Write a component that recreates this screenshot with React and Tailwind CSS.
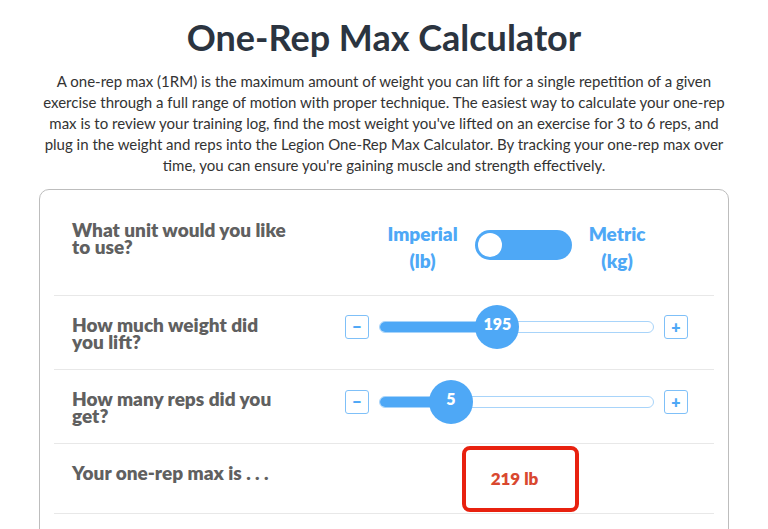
import React from "react";

const BLUE = "bg-[#4ea8f6]";

function StepButton({ children }) {
  return (
    <button className="flex h-[24px] w-[24px] shrink-0 items-center justify-center rounded-[3px] border border-[#7fc0f8] bg-white text-[16px] font-extrabold leading-none text-[#4ea8f6]">
      {children}
    </button>
  );
}

function Slider({ pos, value }) {
  return (
    <div className="flex items-center gap-[10px]">
      <StepButton>−</StepButton>
      <div className="relative h-[12px] flex-1 rounded-full border border-[#a8d4fa] bg-white">
        <div className={`h-full rounded-full ${BLUE}`} style={{ width: pos }} />
        <div
          className={`absolute top-1/2 flex h-[44px] w-[44px] -translate-x-1/2 -translate-y-1/2 items-center justify-center rounded-full ${BLUE} pb-[5px] text-[16px] font-extrabold text-white`}
          style={{ left: pos }}
        >
          {value}
        </div>
      </div>
      <StepButton>+</StepButton>
    </div>
  );
}

function Row({ question, children, className = "", leftClass = "", rightClass = "" }) {
  return (
    <div className={`flex border-b border-[#e8e8e8] ${className}`}>
      <div className={`w-[291px] shrink-0 pl-[18px] ${leftClass}`}>
        <p className="w-[219px] text-[19px] font-extrabold leading-[17px] text-[#606060]">{question}</p>
      </div>
      <div className={`flex-1 pr-[26px] ${rightClass}`}>{children}</div>
    </div>
  );
}

export default function App() {
  return (
    <div className="min-h-screen bg-white" style={{ fontFamily: "Lato, 'Open Sans', sans-serif" }}>
      <div className="mx-auto w-[690px] pt-[14px]">
        <h1 className="text-center text-[36px] font-bold leading-[46px] text-[#2b3440]">One-Rep Max Calculator</h1>
        <p className="mt-[11px] text-center text-[15px] leading-[21px] text-[#333]">
          A one-rep max (1RM) is the maximum amount of weight you can lift for a single repetition of a given exercise
          through a full range of motion with proper technique. The easiest way to calculate your one-rep max is to
          review your training log, find the most weight you've lifted on an exercise for 3 to 6 reps, and plug in the
          weight and reps into the Legion One-Rep Max Calculator. By tracking your one-rep max over time, you can ensure
          you're gaining muscle and strength effectively.
        </p>

        <div className="mt-[13px] rounded-[10px] border-[1.5px] border-[#bdbdbd] px-[14px]">
          <Row
            question="What unit would you like to use?"
            className="h-[106px] items-center"
            leftClass="mb-[9px]"
          >
            <div className="flex items-center justify-center gap-[17px] pt-[8px]">
              <div className="flex flex-col items-center text-[19px] font-extrabold leading-[27px] text-[#4ea8f6]">
                <span>Imperial</span>
                <span>(lb)</span>
              </div>
              <div className={`mt-[-4px] flex h-[30px] w-[97px] items-center rounded-full ${BLUE} px-[3px]`}>
                <div className="h-[24px] w-[24px] rounded-full bg-white" />
              </div>
              <div className="flex flex-col items-center text-[19px] font-extrabold leading-[27px] text-[#4ea8f6]">
                <span>Metric</span>
                <span>(kg)</span>
              </div>
            </div>
          </Row>

          <Row question="How much weight did you lift?" className="h-[74px] items-center" rightClass="mb-[12px]">
            <Slider pos="43%" value="195" />
          </Row>

          <Row question="How many reps did you get?" className="h-[74px] items-center" rightClass="mb-[10px]">
            <Slider pos="26%" value="5" />
          </Row>

          <Row question="Your one-rep max is . . ." className="h-[70px] items-start pt-[20px]" rightClass="-mt-[18px]">
            <div className="ml-[117px] flex h-[66px] w-[117px] items-center justify-center rounded-[8px] border-[4px] border-[#e8210f] pr-[12px] text-[17px] font-extrabold text-[#d9482f]">
              219 lb
            </div>
          </Row>

          <div className="h-[60px]" />
        </div>
      </div>
    </div>
  );
}
